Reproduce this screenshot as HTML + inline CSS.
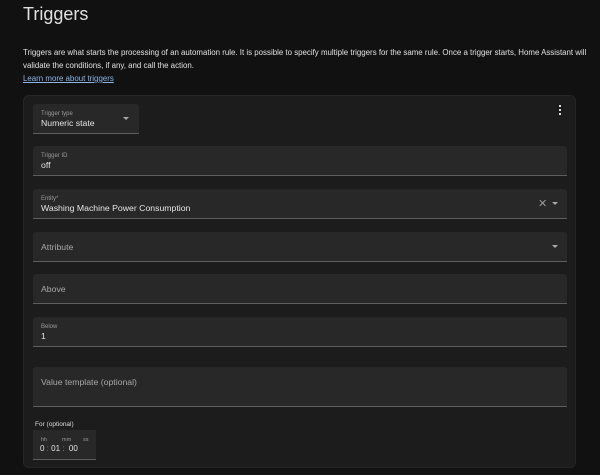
<!DOCTYPE html>
<html><head><style>
body{margin:0;width:600px;height:475px;background:#111111;font-family:"Liberation Sans",sans-serif;color:#e1e1e1;overflow:hidden;position:relative}
.a{position:absolute}
h1{position:absolute;left:23px;top:4px;margin:0;font-size:18px;font-weight:400;color:#e1e1e1}
.p{left:23px;top:46px;font-size:7.9px;line-height:13px;color:#e1e1e1;width:575px}
.p a{color:#8fb4e6;text-decoration:underline}
.card{left:23px;top:95px;width:553px;height:373px;background:#1c1c1c;border-radius:6px;border:1px solid #262626;box-sizing:border-box}
.f{position:absolute;left:33px;width:534px;background:#282828;border-bottom:1px solid #5e5e5e;border-radius:3px 3px 0 0;box-sizing:border-box}
.l{position:absolute;left:8px;font-size:6px;color:#9a9a9a}
.v{position:absolute;left:8px;font-size:8.7px;color:#e4e4e4}
.ph{position:absolute;left:8px;font-size:8.7px;color:#a8a8a8}
.arr{position:absolute;width:0;height:0;border-left:3px solid transparent;border-right:3px solid transparent;border-top:3px solid #aaa}
</style></head><body>
<h1>Triggers</h1>
<div class="a p">Triggers are what starts the processing of an automation rule. It is possible to specify multiple triggers for the same rule. Once a trigger starts, Home Assistant will validate the conditions, if any, and call the action.<br><a>Learn more about triggers</a></div>
<div class="a card"></div>
<div class="a" style="left:559px;top:105px;width:2px;height:2px;background:#ddd;box-shadow:0 4px #ddd,0 8px #ddd"></div>
<div class="f" style="width:106px;top:104px;height:30px"><div class="l" style="top:7px">Trigger type</div><div class="v" style="top:14px">Numeric state</div><div class="arr" style="left:90px;top:13px"></div></div>
<div class="f" style="top:146px;height:30px"><div class="l" style="top:7px">Trigger ID</div><div class="v" style="top:14px">off</div></div>
<div class="f" style="top:189px;height:30px"><div class="l" style="top:7px">Entity*</div><div class="v" style="top:14px">Washing Machine Power Consumption</div><div class="a" style="left:505px;top:8px;font-size:11px;color:#999">✕</div><div class="arr" style="left:519px;top:13px"></div></div>
<div class="f" style="top:232px;height:30px"><div class="ph" style="top:10px">Attribute</div><div class="arr" style="left:519px;top:13px"></div></div>
<div class="f" style="top:274px;height:30px"><div class="ph" style="top:10px">Above</div></div>
<div class="f" style="top:317px;height:30px"><div class="l" style="top:7px">Below</div><div class="v" style="top:14px">1</div></div>
<div class="f" style="top:367px;height:40px"><div class="ph" style="top:10px">Value template (optional)</div></div>
<div class="a" style="left:35px;top:421px;font-size:6.5px;color:#ddd">For (optional)</div>
<div class="f" style="width:63px;top:430px;height:30px;border-radius:0">
<div class="a" style="left:8px;top:7px;font-size:5.5px;color:#999">hh</div>
<div class="a" style="left:29px;top:7px;font-size:5.5px;color:#999">mm</div>
<div class="a" style="left:50px;top:7px;font-size:5.5px;color:#999">ss</div>
<div class="a" style="left:7px;top:14px;font-size:8px;color:#e4e4e4">0 <span style="color:#888">:</span> 01 <span style="color:#888">:</span> &nbsp;00</div>
</div>
</body></html>
